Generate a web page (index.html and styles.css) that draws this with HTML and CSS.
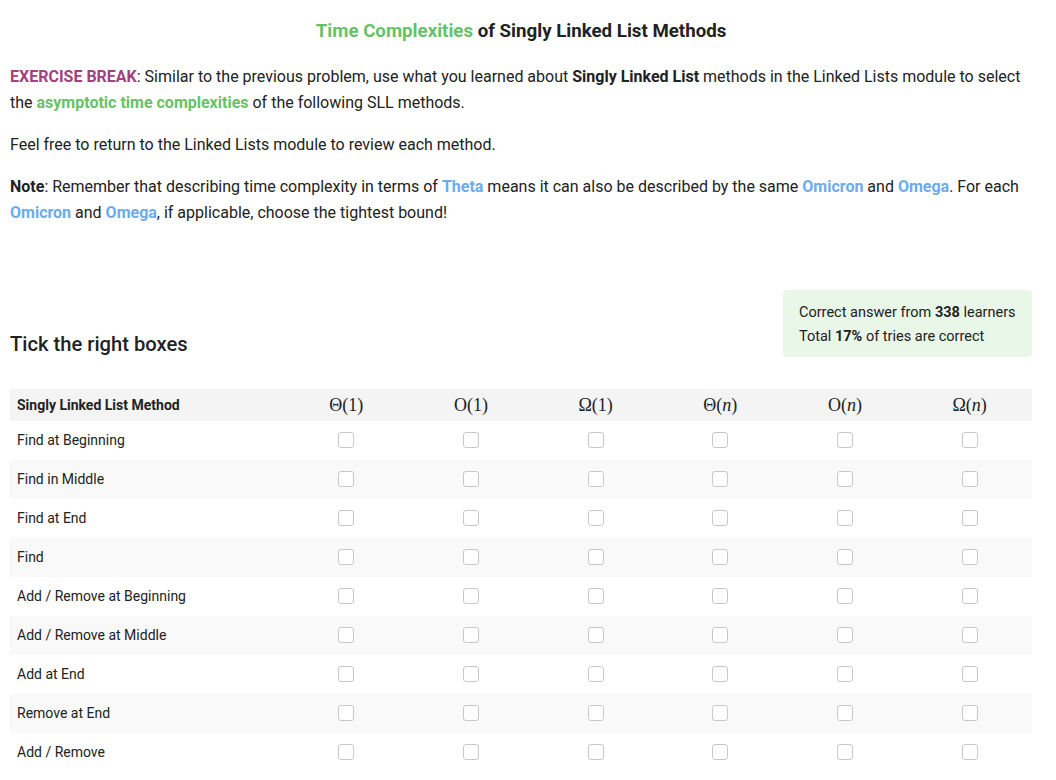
FILE: index.html
```html
<!DOCTYPE html>
<html>
<head>
<meta charset="utf-8">
<link rel="stylesheet" href="styles.css">
</head>
<body>
<div class="page">
  <h1 class="title"><span class="green">Time Complexities</span> of Singly Linked List Methods</h1>
  <p><span class="purple">EXERCISE BREAK</span>: Similar to the previous problem, use what you learned about <b>Singly Linked List</b> methods in the Linked Lists module to select the <span class="green">asymptotic time complexities</span> of the following SLL methods.</p>
  <p>Feel free to return to the Linked Lists module to review each method.</p>
  <p><b>Note</b>: Remember that describing time complexity in terms of <span class="blue">Theta</span> means it can also be described by the same <span class="blue">Omicron</span> and <span class="blue">Omega</span>. For each <span class="blue">Omicron</span> and <span class="blue">Omega</span>, if applicable, choose the tightest bound!</p>

  <div class="quiz-head">
    <h2 class="tick">Tick the right boxes</h2>
    <div class="stats">
      <div>Correct answer from <b>338</b> learners</div>
      <div>Total <b>17%</b> of tries are correct</div>
    </div>
  </div>

  <div class="table">
    <div class="row head">
      <div class="name">Singly Linked List Method</div>
      <div class="math">Θ(1)</div>
      <div class="math">O(1)</div>
      <div class="math">Ω(1)</div>
      <div class="math">Θ(<i>n</i>)</div>
      <div class="math">O(<i>n</i>)</div>
      <div class="math">Ω(<i>n</i>)</div>
    </div>
    <div class="row"><div class="name">Find at Beginning</div><div class="cell"><span class="cb"></span></div><div class="cell"><span class="cb"></span></div><div class="cell"><span class="cb"></span></div><div class="cell"><span class="cb"></span></div><div class="cell"><span class="cb"></span></div><div class="cell"><span class="cb"></span></div></div>
    <div class="row alt"><div class="name">Find in Middle</div><div class="cell"><span class="cb"></span></div><div class="cell"><span class="cb"></span></div><div class="cell"><span class="cb"></span></div><div class="cell"><span class="cb"></span></div><div class="cell"><span class="cb"></span></div><div class="cell"><span class="cb"></span></div></div>
    <div class="row"><div class="name">Find at End</div><div class="cell"><span class="cb"></span></div><div class="cell"><span class="cb"></span></div><div class="cell"><span class="cb"></span></div><div class="cell"><span class="cb"></span></div><div class="cell"><span class="cb"></span></div><div class="cell"><span class="cb"></span></div></div>
    <div class="row alt"><div class="name">Find</div><div class="cell"><span class="cb"></span></div><div class="cell"><span class="cb"></span></div><div class="cell"><span class="cb"></span></div><div class="cell"><span class="cb"></span></div><div class="cell"><span class="cb"></span></div><div class="cell"><span class="cb"></span></div></div>
    <div class="row"><div class="name">Add / Remove at Beginning</div><div class="cell"><span class="cb"></span></div><div class="cell"><span class="cb"></span></div><div class="cell"><span class="cb"></span></div><div class="cell"><span class="cb"></span></div><div class="cell"><span class="cb"></span></div><div class="cell"><span class="cb"></span></div></div>
    <div class="row alt"><div class="name">Add / Remove at Middle</div><div class="cell"><span class="cb"></span></div><div class="cell"><span class="cb"></span></div><div class="cell"><span class="cb"></span></div><div class="cell"><span class="cb"></span></div><div class="cell"><span class="cb"></span></div><div class="cell"><span class="cb"></span></div></div>
    <div class="row"><div class="name">Add at End</div><div class="cell"><span class="cb"></span></div><div class="cell"><span class="cb"></span></div><div class="cell"><span class="cb"></span></div><div class="cell"><span class="cb"></span></div><div class="cell"><span class="cb"></span></div><div class="cell"><span class="cb"></span></div></div>
    <div class="row alt"><div class="name">Remove at End</div><div class="cell"><span class="cb"></span></div><div class="cell"><span class="cb"></span></div><div class="cell"><span class="cb"></span></div><div class="cell"><span class="cb"></span></div><div class="cell"><span class="cb"></span></div><div class="cell"><span class="cb"></span></div></div>
    <div class="row"><div class="name">Add / Remove</div><div class="cell"><span class="cb"></span></div><div class="cell"><span class="cb"></span></div><div class="cell"><span class="cb"></span></div><div class="cell"><span class="cb"></span></div><div class="cell"><span class="cb"></span></div><div class="cell"><span class="cb"></span></div></div>
  </div>
</div>
</body>
</html>
```

FILE: styles.css
```css
html, body {
  margin: 0;
  padding: 0;
  background: #ffffff;
}
body {
  font-family: Roboto, "Liberation Sans", sans-serif;
  color: #222222;
  font-size: 16px;
  line-height: 26px;
}
.page {
  width: 1022px;
  margin-left: 10px;
  padding-top: 17px;
}
.title {
  margin: 0 0 19px 0;
  font-size: 18.7px;
  line-height: 28px;
  font-weight: 700;
  text-align: center;
  color: #222222;
}
p {
  margin: 0 0 16px 0;
}
b {
  font-weight: 700;
}
.green {
  color: #66c266;
  font-weight: 700;
}
.purple {
  color: #a3407e;
  font-weight: 700;
}
.blue {
  color: #6aacee;
  font-weight: 700;
}
.quiz-head {
  display: flex;
  justify-content: space-between;
  align-items: flex-end;
  margin-top: 64px;
}
.tick {
  margin: 0 0 -1px 0;
  font-size: 20.2px;
  line-height: 28px;
  font-weight: 500;
  color: #222222;
}
.stats {
  width: 249px;
  box-sizing: border-box;
  background: #e8f7e8;
  border-radius: 4px;
  padding: 11px 16px 8px 16px;
  font-size: 14.5px;
  line-height: 24px;
  color: #222222;
}
.table {
  margin-top: 32px;
}
.row {
  display: grid;
  grid-template-columns: 274px repeat(6, 1fr);
  height: 39px;
  align-items: center;
  font-size: 14px;
  background: #ffffff;
}
.row.alt {
  background: #f9f9f9;
}
.row.head {
  height: 32px;
  background: #f4f4f4;
}
.name {
  padding-left: 7px;
  padding-bottom: 1px;
}
.head .name {
  font-weight: 700;
}
.math {
  text-align: center;
  font-family: "Liberation Serif", "DejaVu Serif", serif;
  font-size: 18px;
  color: #222222;
}
.math i {
  font-style: italic;
}
.cell {
  display: flex;
  justify-content: center;
  padding-bottom: 1px;
}
.cb {
  display: block;
  width: 14px;
  height: 14px;
  border: 1px solid #c8c8c8;
  border-radius: 3px;
  background: #ffffff;
}
```
